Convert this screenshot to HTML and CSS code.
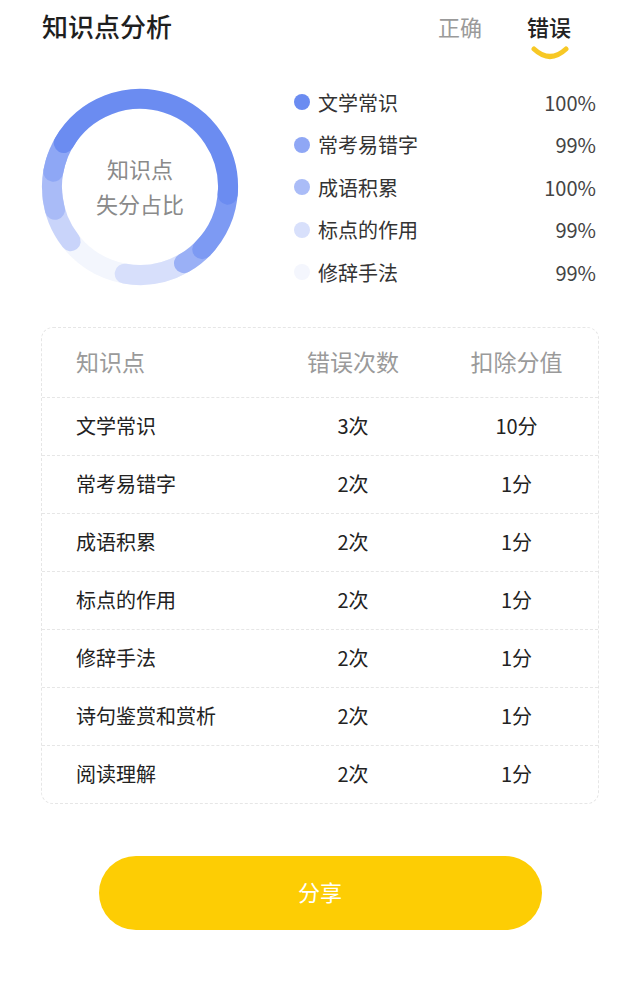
FILE: index.html
```html
<!DOCTYPE html>
<html lang="zh-CN">
<head>
<meta charset="utf-8">
<title>知识点分析</title>
<link rel="stylesheet" href="styles.css">
</head>
<body>
<div class="page">
  <header class="header">
    <h1 class="title">知识点分析</h1>
    <nav class="tabs">
      <div class="tab">正确</div>
      <div class="tab tab-active">错误
        <svg class="tab-mark" width="40" height="16" viewBox="0 0 40 16"><path d="M4 4 Q20 19 36 4" fill="none" stroke="#f7c825" stroke-width="5" stroke-linecap="round"/></svg>
      </div>
    </nav>
  </header>

  <section class="summary">
    <div class="donut">
      <svg width="200" height="200" viewBox="0 0 200 200">
        <circle cx="100" cy="100" r="88" fill="none" stroke="#f3f6fd" stroke-width="20"/>
        <path d="M144 176.2 A88 88 0 0 1 84.7 186.7" fill="none" stroke="#d7dffb" stroke-width="20" stroke-linecap="round"/>
        <path d="M30.7 154.2 A88 88 0 0 1 12.3 107.7" fill="none" stroke="#c9d4fa" stroke-width="20" stroke-linecap="round"/>
        <path d="M15 122.8 A88 88 0 0 1 17.3 69.9" fill="none" stroke="#a9bbf7" stroke-width="20" stroke-linecap="round"/>
        <path d="M167.4 156.6 A88 88 0 0 1 144 176.2" fill="none" stroke="#9ab0f6" stroke-width="20" stroke-linecap="round"/>
        <path d="M13.3 84.7 A88 88 0 0 1 27.9 49.5" fill="none" stroke="#8ea7f5" stroke-width="20" stroke-linecap="round"/>
        <path d="M187.9 103.1 A88 88 0 0 1 162.2 162.2" fill="none" stroke="#7d9af3" stroke-width="20" stroke-linecap="round"/>
        <path d="M23.8 56 A88 88 0 0 1 187.7 107.7" fill="none" stroke="#6b8cf1" stroke-width="20" stroke-linecap="round"/>
      </svg>
      <div class="donut-label">知识点<br>失分占比</div>
    </div>
    <ul class="legend">
      <li class="legend-row"><span class="dot dot-1"></span><span class="legend-name">文学常识</span><span class="legend-val">100%</span></li>
      <li class="legend-row"><span class="dot dot-2"></span><span class="legend-name">常考易错字</span><span class="legend-val">99%</span></li>
      <li class="legend-row"><span class="dot dot-3"></span><span class="legend-name">成语积累</span><span class="legend-val">100%</span></li>
      <li class="legend-row"><span class="dot dot-4"></span><span class="legend-name">标点的作用</span><span class="legend-val">99%</span></li>
      <li class="legend-row"><span class="dot dot-5"></span><span class="legend-name">修辞手法</span><span class="legend-val">99%</span></li>
    </ul>
  </section>

  <section class="table">
    <div class="row row-head"><div class="c1">知识点</div><div class="c2">错误次数</div><div class="c3">扣除分值</div></div>
    <div class="row"><div class="c1">文学常识</div><div class="c2">3次</div><div class="c3">10分</div></div>
    <div class="row"><div class="c1">常考易错字</div><div class="c2">2次</div><div class="c3">1分</div></div>
    <div class="row"><div class="c1">成语积累</div><div class="c2">2次</div><div class="c3">1分</div></div>
    <div class="row"><div class="c1">标点的作用</div><div class="c2">2次</div><div class="c3">1分</div></div>
    <div class="row"><div class="c1">修辞手法</div><div class="c2">2次</div><div class="c3">1分</div></div>
    <div class="row"><div class="c1">诗句鉴赏和赏析</div><div class="c2">2次</div><div class="c3">1分</div></div>
    <div class="row"><div class="c1">阅读理解</div><div class="c2">2次</div><div class="c3">1分</div></div>
  </section>

  <div class="actions">
    <button class="share">分享</button>
  </div>
</div>
</body>
</html>
```

FILE: styles.css
```css
* { box-sizing: border-box; }
html, body { margin: 0; padding: 0; background: #ffffff; }
body {
  font-family: "Noto Sans CJK SC", "Noto Sans", "Liberation Sans", sans-serif;
  color: #222;
}
.page { width: 640px; }

.header {
  display: flex;
  justify-content: space-between;
  align-items: flex-start;
  padding: 9px 69px 0 42px;
  height: 66px;
}
.title {
  margin: 0;
  font-size: 26px;
  line-height: 34px;
  font-weight: 500;
  color: #1f1f1f;
}
.tabs { display: flex; gap: 45px; }
.tab {
  position: relative;
  font-size: 22px;
  line-height: 34px;
  color: #9a9a9a;
}
.tab-active { color: #222; font-weight: 500; }
.tab-mark {
  position: absolute;
  left: 3px;
  top: 36px;
}

.summary {
  display: flex;
  align-items: flex-start;
  padding-left: 40px;
  margin-top: 15px;
}
.donut {
  position: relative;
  width: 200px;
  height: 200px;
  margin-top: 6px;
  flex: none;
}
.donut svg { display: block; }
.donut-label {
  position: absolute;
  inset: 0;
  display: flex;
  align-items: center;
  justify-content: center;
  text-align: center;
  font-size: 22px;
  line-height: 35px;
  color: #8a8a8a;
  padding-bottom: 2px;
}
.legend {
  list-style: none;
  margin: 0 0 0 54px;
  padding: 0;
  width: 302px;
}
.legend-row {
  display: flex;
  align-items: center;
  height: 42.5px;
  font-size: 20px;
}
.dot {
  width: 16px;
  height: 16px;
  border-radius: 50%;
  margin-right: 8px;
  flex: none;
}
.dot-1 { background: #6b8cf1; }
.dot-2 { background: #8fa7f5; }
.dot-3 { background: #aabcf7; }
.dot-4 { background: #d8e0fb; }
.dot-5 { background: #f4f6fd; }
.legend-name { flex: 1; color: #333; }
.legend-val { color: #444; }

.table {
  margin: 33px 41px 0 41px;
  border: 1px dashed #e6e6e6;
  border-radius: 12px;
}
.row {
  display: grid;
  grid-template-columns: 229px 164px 163px;
  align-items: center;
  height: 58px;
  border-top: 1px dashed #e6e6e6;
  font-size: 20px;
  color: #222;
  padding-bottom: 2px;
}
.row-head {
  height: 69px;
  border-top: none;
  font-size: 23px;
  color: #9a9a9a;
}
.c1 { padding-left: 34px; }
.c2, .c3 { text-align: center; }

.actions {
  display: flex;
  justify-content: center;
  margin-top: 52px;
}
.share {
  width: 443px;
  height: 74px;
  border: none;
  border-radius: 37px;
  background: #fdcd04;
  color: #ffffff;
  font-family: inherit;
  font-size: 22px;
  padding: 0 0 4px 0;
}
```
